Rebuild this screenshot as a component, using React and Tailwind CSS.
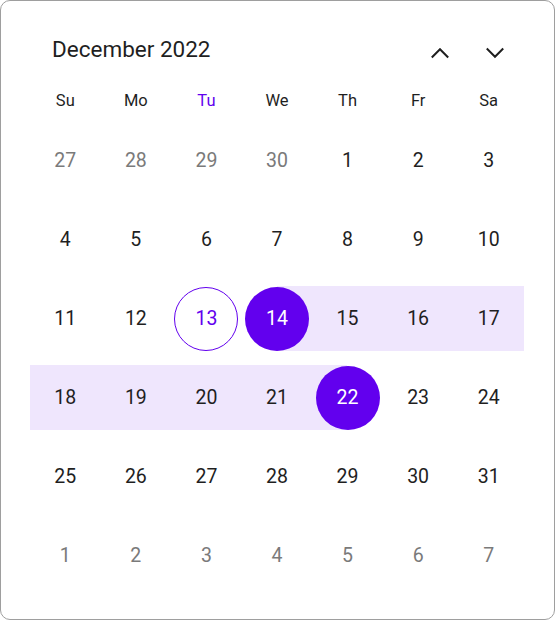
import React from 'react';

const weekDays = ['Su', 'Mo', 'Tu', 'We', 'Th', 'Fr', 'Sa'];

// December 2022 grid, padded with the neighbouring months
const buildWeeks = () => {
  const cells = [];
  [27, 28, 29, 30].forEach((d) => cells.push({ day: d, outside: true }));
  for (let d = 1; d <= 31; d++) cells.push({ day: d, outside: false });
  for (let d = 1; d <= 7; d++) cells.push({ day: d, outside: true });
  const weeks = [];
  for (let i = 0; i < cells.length; i += 7) weeks.push(cells.slice(i, i + 7));
  return weeks;
};

const today = 13;
const rangeStart = 14;
const rangeEnd = 22;

const Chevron = ({ up }) => (
  <svg width="24" height="24" viewBox="0 0 24 24" fill="none" className="text-[#1f1f1f]">
    <path
      d={up ? 'M4.5 15.75l7.5-7.5 7.5 7.5' : 'M4.5 8.25l7.5 7.5 7.5-7.5'}
      stroke="currentColor"
      strokeWidth="2"
      strokeLinecap="square"
      strokeLinejoin="miter"
    />
  </svg>
);

const DayCell = ({ cell }) => {
  const { day, outside } = cell;
  const inMonth = !outside;
  const isStart = inMonth && day === rangeStart;
  const isEnd = inMonth && day === rangeEnd;
  const inRange = inMonth && day > rangeStart && day < rangeEnd;
  const isToday = inMonth && day === today;

  let band = '';
  if (isStart) band = 'bg-[linear-gradient(to_right,transparent_50%,#efe6fd_50%)]';
  else if (isEnd) band = 'bg-[linear-gradient(to_right,#efe6fd_50%,transparent_50%)]';
  else if (inRange) band = 'bg-[#efe6fd]';

  let circle = 'text-[#1f1f1f]';
  if (outside) circle = 'text-[#7a7a7a]';
  if (isToday) circle = 'border-[1.5px] border-[#6200ee] text-[#6200ee]';
  if (isStart || isEnd) circle = 'bg-[#6200ee] text-white';

  return (
    <div className="h-[79px] flex items-center">
      <div className={`w-full h-[65px] flex items-center justify-center ${band}`}>
        <div className={`w-[64px] h-[64px] rounded-full flex items-center justify-center text-[19.5px] ${circle}`}>
          {day}
        </div>
      </div>
    </div>
  );
};

export default function App() {
  const weeks = buildWeeks();

  return (
    <div className="w-[555px] h-[620px] bg-white" style={{ fontFamily: 'Roboto, "Liberation Sans", sans-serif' }}>
      <div className="h-full border border-[#9e9e9e] rounded-[10px] pl-[29px] pr-[30px] pt-[29px] overflow-hidden">
        {/* Month header with prev / next */}
        <div className="h-[40px] flex items-center justify-between pl-[22px]">
          <span className="text-[22.5px] text-[#1f1f1f]">December 2022</span>
          <div className="flex items-center gap-[31px] pr-[17px] pt-[6px]">
            <Chevron up />
            <Chevron />
          </div>
        </div>

        {/* Weekday labels */}
        <div className="grid grid-cols-7 h-[40px] items-center mt-[11px]">
          {weekDays.map((d) => (
            <div
              key={d}
              className={`text-center text-[16.5px] ${d === 'Tu' ? 'text-[#6200ee]' : 'text-[#1f1f1f]'}`}
            >
              {d}
            </div>
          ))}
        </div>

        {/* Day grid */}
        {weeks.map((week, i) => (
          <div key={i} className="grid grid-cols-7">
            {week.map((cell, j) => (
              <DayCell key={j} cell={cell} />
            ))}
          </div>
        ))}
      </div>
    </div>
  );
}
